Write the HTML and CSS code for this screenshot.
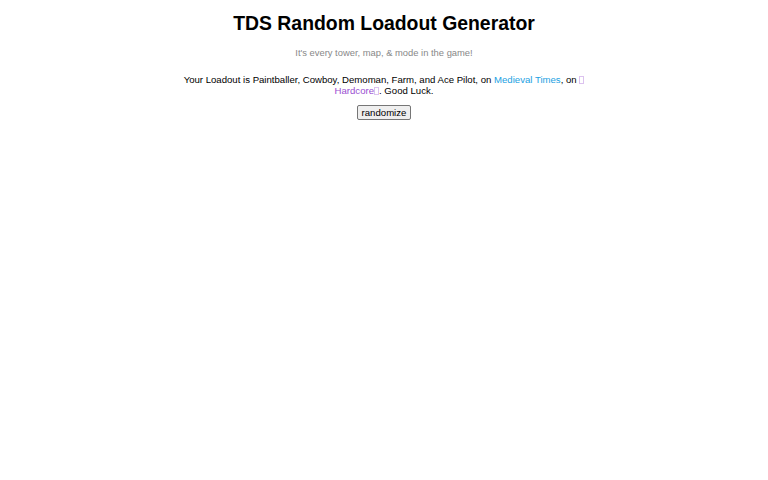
FILE: index.html
```html
<!DOCTYPE html>
<html lang="en">
<head>
    <meta charset="UTF-8">
    <meta name="viewport" content="width=device-width, initial-scale=1.0">
    <title>TDS Random Loadout Generator</title>
    <link rel="stylesheet" href="styles.css">
</head>
<body>
    <h1 class="title">TDS Random Loadout Generator</h1>
    <p class="subtitle">It's every tower, map, &amp; mode in the game!</p>

    <p class="loadout" id="loadout">
        Your Loadout is Paintballer, Cowboy, Demoman, Farm, and Ace Pilot, on
        <span class="map">Medieval Times</span>, on
        <span class="mode"><span class="glyph"></span> Hardcore<span class="glyph"></span></span>. Good Luck.
    </p>

    <button class="randomize" id="randomize">randomize</button>
</body>
</html>
```

FILE: styles.css
```css
body {
    font-family: "Liberation Sans", Arial, sans-serif;
    margin: 8px;
    text-align: center;
    color: #000;
    background-color: #fff;
}

.title {
    font-size: 19.4px;
    font-weight: bold;
    margin: 0;
    line-height: 30px;
}

.subtitle {
    font-size: 9.4px;
    color: #888;
    margin: 9px 0 0;
}

.loadout {
    font-size: 9.6px;
    line-height: 11px;
    max-width: 410px;
    margin: 16px auto 0;
}

.map {
    color: #1ba1e2;
}

.mode {
    color: #9a4fd1;
}

/* missing-emoji boxes around the mode name */
.glyph {
    display: inline-block;
    width: 3px;
    height: 6px;
    border: 1px solid currentColor;
    opacity: 0.35;
    vertical-align: -1px;
}

.randomize {
    font-family: "Liberation Sans", Arial, sans-serif;
    font-size: 9.6px;
    margin-top: 9px;
    padding: 1px 4px;
    color: #000;
    background-color: #efefef;
    border: 1px solid #767676;
    border-radius: 2px;
}
```
